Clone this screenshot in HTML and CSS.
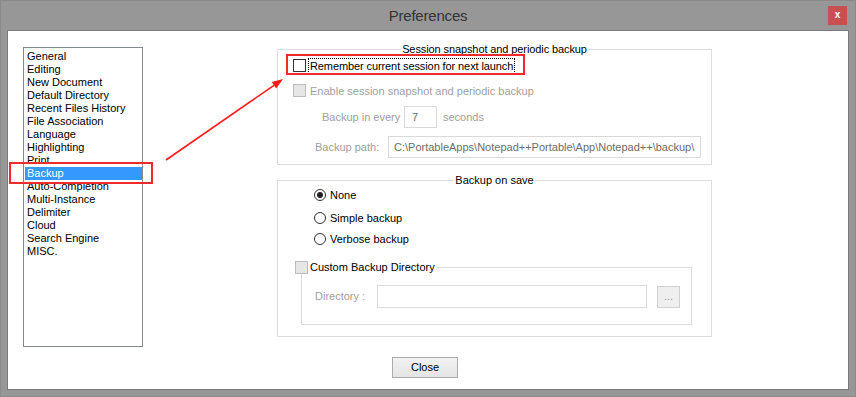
FILE: index.html
```html
<!DOCTYPE html>
<html>
<head>
<meta charset="utf-8">
<title>Preferences</title>
<link rel="stylesheet" href="styles.css">
</head>
<body>
<div class="window">
  <div class="titlebar">
    <span class="title">Preferences</span>
    <span class="close">x</span>
  </div>
  <div class="client">
    <div class="main">
      <ul class="list">
        <li>General</li>
        <li>Editing</li>
        <li>New Document</li>
        <li>Default Directory</li>
        <li>Recent Files History</li>
        <li>File Association</li>
        <li>Language</li>
        <li>Highlighting</li>
        <li>Print</li>
        <li class="sel">Backup</li>
        <li>Auto-Completion</li>
        <li>Multi-Instance</li>
        <li>Delimiter</li>
        <li>Cloud</li>
        <li>Search Engine</li>
        <li>MISC.</li>
      </ul>
      <div class="panel">
        <fieldset class="group g1">
          <legend class="gtitle">Session snapshot and periodic backup</legend>
          <div class="gbody g1body">
            <div class="row r1"><span class="cb"></span><span class="lbl focus">Remember current session for next launch</span></div>
            <div class="row r2 disabled"><span class="cb dis"></span><span class="lbl">Enable session snapshot and periodic backup</span></div>
            <div class="row r3 disabled"><span class="l-every">Backup in every</span><span class="input small">7</span><span class="l-sec">seconds</span></div>
            <div class="row r4 disabled"><span class="l-path">Backup path:</span><span class="input path">C:\PortableApps\Notepad++Portable\App\Notepad++\backup\</span></div>
          </div>
        </fieldset>
        <fieldset class="group g2">
          <legend class="gtitle">Backup on save</legend>
          <div class="gbody g2body">
            <div class="row rad rad1"><span class="radio on"></span><span class="rlbl">None</span></div>
            <div class="row rad rad2"><span class="radio"></span><span class="rlbl">Simple backup</span></div>
            <div class="row rad rad3"><span class="radio"></span><span class="rlbl">Verbose backup</span></div>
            <fieldset class="sub">
              <legend class="stitle"><span class="cb dis"></span><span class="slbl">Custom Backup Directory</span></legend>
              <div class="row dirrow disabled"><span class="l-dir">Directory :</span><span class="input dir"></span><span class="browse">...</span></div>
            </fieldset>
          </div>
        </fieldset>
      </div>
    </div>
    <div class="footer"><span class="btn">Close</span></div>
  </div>
  <svg class="annot" width="856" height="397" viewBox="0 0 856 397">
    <rect x="10" y="163" width="142" height="20" fill="none" stroke="#ee2a2a" stroke-width="2"/>
    <rect x="287" y="55" width="237" height="19" fill="none" stroke="#ee2a2a" stroke-width="2"/>
    <line x1="166" y1="160" x2="274" y2="85.3" stroke="#ff1a1a" stroke-width="1.6"/>
    <polygon points="283,79 276.2,88.6 271.7,82" fill="#ff1a1a"/>
  </svg>
</div>
</body>
</html>
```
FILE: styles.css
```css
* { box-sizing: border-box; }
html, body { margin: 0; padding: 0; }
body {
  font-family: "Liberation Sans", Arial, sans-serif;
  font-size: 11px;
  color: #000;
  background: #979797;
}
.window {
  position: relative;
  width: 856px;
  height: 397px;
  background: #979797;
  border: 1px solid #8a8a8a;
  padding: 0 6px 6px 6px;
  display: flex;
  flex-direction: column;
}
.titlebar {
  height: 29px;
  display: grid;
  grid-template-columns: 1fr auto 1fr;
}
.title {
  grid-column: 2;
  font-size: 15px;
  line-height: 29px;
  color: #333;
  letter-spacing: -0.2px;
}
.close {
  grid-column: 3;
  justify-self: end;
  align-self: start;
  margin-top: 5px;
  margin-right: 2px;
  width: 19px;
  height: 19px;
  background: #c75050;
  color: #fff;
  font-weight: bold;
  font-size: 10px;
  line-height: 18px;
  text-align: center;
}
.client {
  height: 360px;
  background: #fff;
  border: 1px solid #7a7a7a;
  display: flex;
  flex-direction: column;
}
.main {
  display: flex;
  align-items: flex-start;
}
.list {
  list-style: none;
  margin: 16px 0 0 15px;
  width: 120px;
  height: 300px;
  border: 1px solid #828790;
  padding: 2px 0 0 1px;
}
.list li {
  height: 13px;
  line-height: 13px;
  padding-left: 2px;
  white-space: nowrap;
}
.list li.sel {
  background: #3399ff;
  color: #fff;
}
.panel {
  margin: 11px 0 0 134px;
  width: 435px;
}
.group {
  margin: 0;
  padding: 0;
  border: 1px solid #dcdcdc;
  min-width: 0;
}
.gtitle {
  margin: 0 auto;
  padding: 0 1px;
  line-height: 14px;
}
.g1 .gtitle { letter-spacing: -0.1px; }
.gbody {
  padding-left: 15px;
}
.row {
  display: flex;
  align-items: center;
  white-space: nowrap;
}
.disabled { color: #a0a0a0; }
.cb {
  display: inline-block;
  width: 13px;
  height: 13px;
  border: 1px solid #333;
  background: #fff;
  flex: none;
}
.cb.dis {
  border-color: #bcbcbc;
  background: #e6e6e6;
}
.lbl { margin-left: 3px; }
.focus {
  border: 1px dotted #000;
  padding: 0 1px;
  line-height: 14px;
  margin-left: 2px;
  letter-spacing: -0.1px;
}
.g1body { padding-top: 3px; padding-bottom: 6px; }
.r1, .r2 { height: 13px; }
.r2 { margin-top: 12px; }
.r2 .lbl { margin-left: 4px; }
.r3 { margin-top: 9px; height: 22px; }
.r4 { margin-top: 8px; height: 22px; }
.input {
  display: inline-block;
  height: 22px;
  border: 1px solid #d9d9d9;
  background: #fff;
  color: #6d6d6d;
  line-height: 20px;
  overflow: hidden;
  white-space: nowrap;
}
.l-every { margin-left: 29px; width: 82px; }
.small { width: 33px; padding-left: 7px; }
.l-sec { margin-left: 6px; }
.l-path { margin-left: 22px; width: 73px; }
.path { width: 313px; padding-left: 5px; }
.g2 { margin-top: 8px; }
.g2body { padding-bottom: 11px; }
.rad { height: 13px; }
.rad1 { margin-top: 1px; }
.rad2 { margin-top: 10px; }
.rad3 { margin-top: 8px; }
.radio {
  display: inline-block;
  width: 12px;
  height: 12px;
  border: 1px solid #333;
  border-radius: 50%;
  margin-left: 21px;
  background: #fff;
  position: relative;
  flex: none;
}
.radio.on::after {
  content: "";
  position: absolute;
  left: 2px;
  top: 2px;
  width: 6px;
  height: 6px;
  border-radius: 50%;
  background: #222;
}
.rlbl { margin-left: 4px; }
.sub {
  margin: 15px 0 0 8px;
  padding: 0;
  width: 391px;
  border: 1px solid #dcdcdc;
  min-width: 0;
}
.stitle {
  margin-left: -7px;
  padding: 0 2px 0 0;
  line-height: 14px;
  height: 14px;
  display: flex;
  align-items: center;
}
.slbl { margin-left: 2px; }
.dirrow {
  margin-top: 11px;
  padding-left: 13px;
  padding-bottom: 16px;
  height: 39px;
  align-items: flex-start;
}
.l-dir { width: 62px; line-height: 23px; }
.dir { width: 270px; height: 23px; }
.browse {
  margin: 1px 0 0 10px;
  width: 23px;
  height: 22px;
  border: 1px solid #d0d0d0;
  background: #efefef;
  color: #9a9a9a;
  text-align: center;
  line-height: 18px;
  font-size: 11px;
}
.footer {
  display: flex;
  justify-content: center;
  padding-right: 6px;
  margin-top: 10px;
}
.btn {
  width: 66px;
  height: 21px;
  border: 1px solid #acacac;
  background: linear-gradient(#f2f2f2, #e5e5e5);
  text-align: center;
  line-height: 19px;
  font-size: 11px;
}
.annot {
  position: absolute;
  left: -1px;
  top: -1px;
  pointer-events: none;
}
```
